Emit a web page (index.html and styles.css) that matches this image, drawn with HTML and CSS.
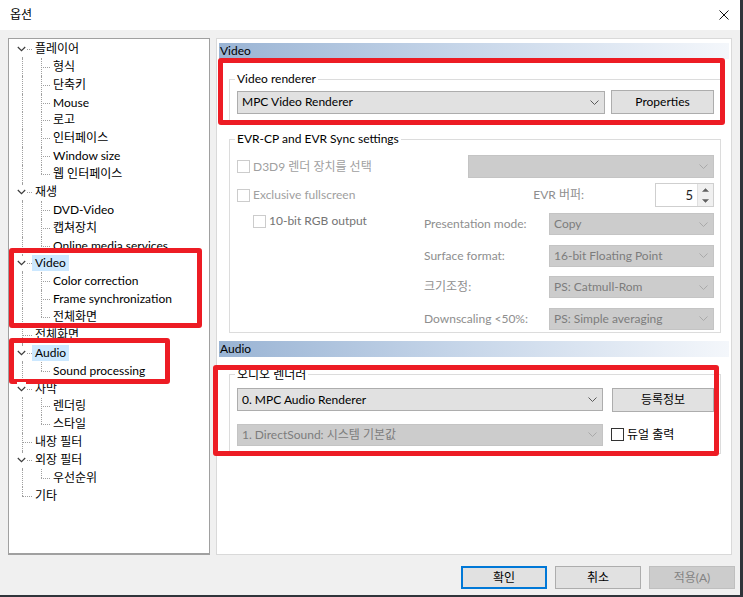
FILE: index.html
```html
<!DOCTYPE html>
<html lang="ko">

<head>
    <meta charset="UTF-8">
    <title>옵션</title>
    <link rel="stylesheet" href="styles.css">
</head>

<body>
    <div class="window">
        <div class="titlebar">
            <span class="title">옵션</span>
            <svg class="close" viewBox="0 0 10 10"><path d="M0.5 0.5 L9.5 9.5 M9.5 0.5 L0.5 9.5" /></svg>
        </div>

        <div class="main">
            <!-- left: settings tree -->
            <div class="tree">
                <div class="node top first"><span class="gutter"><svg class="twisty" viewBox="0 0 9 14"><path d="M0.8 5 L4.5 8.6 L8.2 5" /></svg></span><span class="label">플레이어</span></div>
                <div class="node child"><span class="gutter"></span><span class="label">형식</span></div>
                <div class="node child"><span class="gutter"></span><span class="label">단축키</span></div>
                <div class="node child"><span class="gutter"></span><span class="label">Mouse</span></div>
                <div class="node child"><span class="gutter"></span><span class="label">로고</span></div>
                <div class="node child"><span class="gutter"></span><span class="label">인터페이스</span></div>
                <div class="node child"><span class="gutter"></span><span class="label">Window size</span></div>
                <div class="node child last"><span class="gutter"></span><span class="label">웹 인터페이스</span></div>
                <div class="node top"><span class="gutter"><svg class="twisty" viewBox="0 0 9 14"><path d="M0.8 5 L4.5 8.6 L8.2 5" /></svg></span><span class="label">재생</span></div>
                <div class="node child"><span class="gutter"></span><span class="label">DVD-Video</span></div>
                <div class="node child"><span class="gutter"></span><span class="label">캡쳐장치</span></div>
                <div class="node child last"><span class="gutter"></span><span class="label">Online media services</span></div>
                <div class="node top"><span class="gutter"><svg class="twisty" viewBox="0 0 9 14"><path d="M0.8 5 L4.5 8.6 L8.2 5" /></svg></span><span class="label selected">Video</span></div>
                <div class="node child"><span class="gutter"></span><span class="label">Color correction</span></div>
                <div class="node child"><span class="gutter"></span><span class="label">Frame synchronization</span></div>
                <div class="node child last"><span class="gutter"></span><span class="label">전체화면</span></div>
                <div class="node top"><span class="gutter"></span><span class="label">전체화면</span></div>
                <div class="node top"><span class="gutter"><svg class="twisty" viewBox="0 0 9 14"><path d="M0.8 5 L4.5 8.6 L8.2 5" /></svg></span><span class="label selected">Audio</span></div>
                <div class="node child last"><span class="gutter"></span><span class="label">Sound processing</span></div>
                <div class="node top"><span class="gutter"><svg class="twisty" viewBox="0 0 9 14"><path d="M0.8 5 L4.5 8.6 L8.2 5" /></svg></span><span class="label">자막</span></div>
                <div class="node child"><span class="gutter"></span><span class="label">렌더링</span></div>
                <div class="node child last"><span class="gutter"></span><span class="label">스타일</span></div>
                <div class="node top"><span class="gutter"></span><span class="label">내장 필터</span></div>
                <div class="node top"><span class="gutter"><svg class="twisty" viewBox="0 0 9 14"><path d="M0.8 5 L4.5 8.6 L8.2 5" /></svg></span><span class="label">외장 필터</span></div>
                <div class="node child last"><span class="gutter"></span><span class="label">우선순위</span></div>
                <div class="node top end"><span class="gutter"></span><span class="label">기타</span></div>
            </div>

            <!-- right: page -->
            <div class="page">
                <div class="section-head">Video</div>

                <fieldset class="group renderer">
                    <legend>Video renderer</legend>
                    <div class="row">
                        <div class="combo renderer-combo">
                            <span>MPC Video Renderer</span>
                            <svg class="chev" viewBox="0 0 9 5"><path d="M0.5 0.5 L4.5 4.5 L8.5 0.5" /></svg>
                        </div>
                        <button class="btn props">Properties</button>
                    </div>
                </fieldset>

                <fieldset class="group evr">
                    <legend>EVR-CP and EVR Sync settings</legend>
                    <div class="row">
                        <label class="check off"><span class="box"></span>D3D9 렌더 장치를 선택</label>
                        <div class="combo off d3d">
                            <span></span>
                            <svg class="chev" viewBox="0 0 9 5"><path d="M0.5 0.5 L4.5 4.5 L8.5 0.5" /></svg>
                        </div>
                    </div>
                    <div class="row row-buffer">
                        <label class="check off"><span class="box"></span>Exclusive fullscreen</label>
                        <span class="field-label buffer-label">EVR 버퍼:</span>
                        <div class="spin">
                            <span class="spin-value">5</span>
                            <span class="spin-btns">
                                <svg viewBox="0 0 7 4"><path d="M0.5 3.5 L3.5 0.5 L6.5 3.5 Z" /></svg>
                                <svg viewBox="0 0 7 4"><path d="M0.5 0.5 L3.5 3.5 L6.5 0.5 Z" /></svg>
                            </span>
                        </div>
                    </div>
                    <div class="lower">
                        <div class="lower-left">
                            <label class="check off dim indent"><span class="box"></span>10-bit RGB output</label>
                        </div>
                        <div class="form">
                            <span class="field-label">Presentation mode:</span>
                            <div class="combo off"><span>Copy</span><svg class="chev" viewBox="0 0 9 5"><path d="M0.5 0.5 L4.5 4.5 L8.5 0.5" /></svg></div>
                            <span class="field-label">Surface format:</span>
                            <div class="combo off"><span>16-bit Floating Point</span><svg class="chev" viewBox="0 0 9 5"><path d="M0.5 0.5 L4.5 4.5 L8.5 0.5" /></svg></div>
                            <span class="field-label">크기조정:</span>
                            <div class="combo off"><span>PS: Catmull-Rom</span><svg class="chev" viewBox="0 0 9 5"><path d="M0.5 0.5 L4.5 4.5 L8.5 0.5" /></svg></div>
                            <span class="field-label">Downscaling &lt;50%:</span>
                            <div class="combo off"><span>PS: Simple averaging</span><svg class="chev" viewBox="0 0 9 5"><path d="M0.5 0.5 L4.5 4.5 L8.5 0.5" /></svg></div>
                        </div>
                    </div>
                </fieldset>

                <div class="section-head">Audio</div>

                <fieldset class="group audio">
                    <legend>오디오 렌더러</legend>
                    <div class="row">
                        <div class="combo audio-combo">
                            <span>0. MPC Audio Renderer</span>
                            <svg class="chev" viewBox="0 0 9 5"><path d="M0.5 0.5 L4.5 4.5 L8.5 0.5" /></svg>
                        </div>
                        <button class="btn reg">등록정보</button>
                    </div>
                    <div class="row row-device">
                        <div class="combo off audio-combo">
                            <span>1. DirectSound: 시스템 기본값</span>
                            <svg class="chev" viewBox="0 0 9 5"><path d="M0.5 0.5 L4.5 4.5 L8.5 0.5" /></svg>
                        </div>
                        <label class="check dual"><span class="box"></span>듀얼 출력</label>
                    </div>
                </fieldset>
            </div>
        </div>

        <div class="footer">
            <button class="btn default">확인</button>
            <button class="btn">취소</button>
            <button class="btn off">적용(A)</button>
        </div>

        <!-- red annotation boxes drawn over the dialog -->
        <div class="mark mark-video"></div>
        <div class="mark mark-audio"></div>
        <div class="mark mark-renderer"></div>
        <div class="mark mark-audio-renderer"></div>
    </div>
</body>

</html>
```

FILE: styles.css
```css
* {
    margin: 0;
    padding: 0;
    box-sizing: border-box;
}

html,
body {
    background: #30343a;
}

body {
    font-family: Lato, "Noto Sans CJK KR", sans-serif;
    font-size: 12px;
    line-height: 16px;
    color: #000;
}

/* Window */
.window {
    position: relative;
    width: 740px;
    height: 595px;
    background: #f0f0f0;
}

.titlebar {
    height: 30px;
    background: #fff;
    display: flex;
    align-items: center;
    justify-content: space-between;
    padding: 0 11px 0 10px;
}

.title {
    font-size: 12px;
}

.close {
    width: 10px;
    height: 10px;
    stroke: #111;
    stroke-width: 1;
    fill: none;
}

.main {
    display: flex;
    gap: 6px;
    padding: 8px 0 0 8px;
}

/* Tree */
.tree {
    width: 202px;
    height: 517px;
    background: #fff;
    border: 1px solid #a0a0a0;
    border-bottom-width: 2px;
    padding-top: 1px;
}

.node {
    position: relative;
    display: flex;
    align-items: center;
    height: 17.88px;
    white-space: nowrap;
}

.node::before {
    content: "";
    position: absolute;
    left: 13px;
    top: 0;
    bottom: 0;
    border-left: 1px dotted #a0a0a0;
}

.node.first::before {
    top: 50%;
}

.node.end::before {
    bottom: 50%;
}

.node.top::after {
    content: "";
    position: absolute;
    left: 13px;
    top: 50%;
    width: 10px;
    border-top: 1px dotted #a0a0a0;
}

.node.child::after {
    content: "";
    position: absolute;
    left: 32px;
    top: 0;
    bottom: 0;
    border-left: 1px dotted #a0a0a0;
}

.node.child.last::after {
    bottom: 50%;
}

.gutter {
    position: relative;
    display: flex;
    align-items: center;
    width: 23px;
    height: 100%;
}

.child .gutter {
    width: 41px;
}

.child .gutter::after {
    content: "";
    position: absolute;
    left: 32px;
    top: 50%;
    width: 9px;
    border-top: 1px dotted #a0a0a0;
}

.twisty {
    position: relative;
    z-index: 1;
    width: 9px;
    height: 14px;
    margin-left: 8px;
    background: #fff;
    stroke: #3c3c3c;
    stroke-width: 1.2;
    fill: none;
}

.label {
    padding: 0 3px;
    line-height: 16px;
}

.label.selected {
    background: #cce8ff;
}

/* Right page */
.page {
    width: 516px;
    height: 517px;
    background: #fff;
    border: 1px solid #d9d9d9;
    padding: 4px 2px 0;
}

.section-head {
    height: 16px;
    line-height: 16px;
    padding-left: 1px;
    background: linear-gradient(90deg, #9ab4d4 0%, #c4d4e8 45%, #f4f7fb 100%);
}

.group {
    border: 1px solid #dcdcdc;
    margin: 0 8px 0 10px;
    padding: 0 6px 0 7px;
    min-width: 0;
}

.group legend {
    padding: 0 2px;
    margin-left: -2px;
    line-height: 16px;
}

.renderer {
    margin-top: 12px;
    padding-top: 3px;
    padding-bottom: 6px;
}

.evr {
    margin-top: 10px;
    padding-top: 8px;
    padding-bottom: 2px;
}

.audio {
    margin-top: 10px;
    padding-top: 5px;
    padding-bottom: 7px;
}

.evr + .section-head {
    margin-top: 8px;
}

.row {
    display: flex;
    align-items: center;
}

/* Combo boxes */
.combo {
    display: flex;
    align-items: center;
    justify-content: space-between;
    height: 23px;
    padding: 0 5px 0 4px;
    background: #e1e1e1;
    border: 1px solid #adadad;
    white-space: nowrap;
}

.chev {
    width: 9px;
    height: 5px;
    stroke: #5a5a5a;
    stroke-width: 1;
    fill: none;
    flex-shrink: 0;
}

.combo.off {
    background: #cccccc;
    border-color: #c4c4c4;
    color: #7c7c7c;
}

.combo.off .chev {
    stroke: #a9a9a9;
}

.renderer-combo {
    width: 368px;
}

.audio-combo {
    width: 366px;
}

.d3d {
    width: 246px;
    margin-left: auto;
}

/* Buttons */
.btn {
    height: 24px;
    font: inherit;
    color: #000;
    background: #e1e1e1;
    border: 1px solid #adadad;
}

.props {
    width: 103px;
    margin-left: 6px;
}

.reg {
    width: 102px;
    margin-left: 9px;
}

.btn.off {
    background: #cccccc;
    border-color: #bfbfbf;
    color: #838383;
}

.btn.default {
    border: 2px solid #0078d7;
}

/* Checkboxes */
.check {
    display: inline-flex;
    align-items: center;
    gap: 3px;
    white-space: nowrap;
}

.box {
    width: 13px;
    height: 13px;
    background: #fff;
    border: 1px solid #333;
}

.check.off {
    color: #a0a0a0;
}

.check.off .box {
    border-color: #cccccc;
}

.check.dim {
    color: #747474;
}

.indent {
    margin-left: 16px;
}

.dual {
    margin-left: 8px;
}

/* EVR rows */
.row-buffer {
    margin-top: 5px;
}

.field-label {
    color: #8e8e8e;
    white-space: nowrap;
}

.buffer-label {
    margin-left: auto;
    margin-right: 71px;
}

.spin {
    display: flex;
    width: 59px;
    height: 24px;
    background: #fff;
    border: 1px solid #cfcfcf;
}

.spin-value {
    flex: 1;
    text-align: right;
    padding-right: 4px;
    line-height: 22px;
    font-size: 13px;
    color: #222;
}

.spin-btns {
    width: 16px;
    display: flex;
    flex-direction: column;
    justify-content: space-around;
    align-items: center;
    background: #f0f0f0;
    border-left: 1px solid #e0e0e0;
}

.spin-btns svg {
    width: 7px;
    height: 4px;
    fill: #606060;
    stroke: #606060;
    stroke-width: 0.5;
}

.lower {
    display: flex;
    margin-top: 6px;
}

.lower-left {
    width: 187px;
}

.form {
    display: grid;
    grid-template-columns: 125px 165px;
    grid-auto-rows: 22px;
    row-gap: 9.67px;
    align-items: center;
}

.form .combo {
    height: 22px;
}

.row-device {
    margin-top: 12px;
}

.row-device .combo {
    height: 22px;
}

/* Footer */
.footer {
    display: flex;
    justify-content: flex-end;
    gap: 8px;
    padding: 11px 5px 0 0;
}

.footer .btn {
    width: 86px;
    height: 23px;
}

/* Red annotation boxes */
.mark {
    position: absolute;
    border: 5px solid #ed1c24;
    border-radius: 3px;
}

.mark-video {
    left: 9px;
    top: 248px;
    width: 193px;
    height: 80px;
}

.mark-audio {
    left: 9px;
    top: 338px;
    width: 161px;
    height: 46px;
}

.mark-renderer {
    left: 218px;
    top: 58px;
    width: 507px;
    height: 67px;
}

.mark-audio-renderer {
    left: 213px;
    top: 365px;
    width: 506px;
    height: 91px;
}
```
